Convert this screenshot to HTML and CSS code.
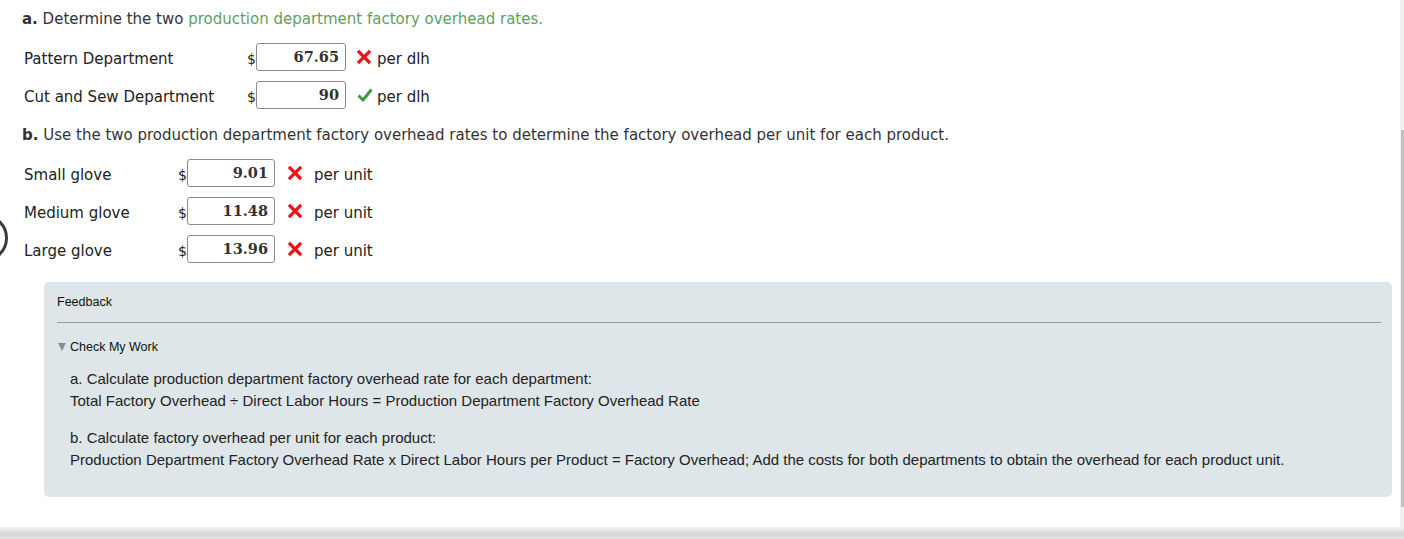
FILE: index.html
```html
<!DOCTYPE html>
<html>
<head>
<meta charset="utf-8">
<link rel="stylesheet" href="styles.css">
</head>
<body>
<div class="page">
  <div class="circle-edge"></div>
  <main class="content">
    <p class="prompt"><b>a.</b> Determine the two <span class="green">production department factory overhead rates.</span></p>
    <div class="rows rows-a">
      <div class="row">
        <span class="label">Pattern Department</span>
        <span class="dollar">$</span>
        <span class="box">67.65</span>
        <span class="mark"><svg width="14" height="14" viewBox="0 0 14 14"><path d="M2 2 L12 12 M12 2 L2 12" stroke="#e8161b" stroke-width="3.2" stroke-linecap="square"/></svg></span>
        <span class="unit">per dlh</span>
      </div>
      <div class="row">
        <span class="label">Cut and Sew Department</span>
        <span class="dollar">$</span>
        <span class="box">90</span>
        <span class="mark"><svg width="16" height="16" viewBox="0 0 16 16"><path d="M1.5 8.5 L6 13 L14.5 2.5" fill="none" stroke="#3d9b3d" stroke-width="3" stroke-linejoin="round"/></svg></span>
        <span class="unit">per dlh</span>
      </div>
    </div>
    <p class="prompt"><b>b.</b> Use the two production department factory overhead rates to determine the factory overhead per unit for each product.</p>
    <div class="rows rows-b">
      <div class="row">
        <span class="label">Small glove</span>
        <span class="dollar">$</span>
        <span class="box">9.01</span>
        <span class="mark"><svg width="14" height="14" viewBox="0 0 14 14"><path d="M2 2 L12 12 M12 2 L2 12" stroke="#e8161b" stroke-width="3.2" stroke-linecap="square"/></svg></span>
        <span class="unit">per unit</span>
      </div>
      <div class="row">
        <span class="label">Medium glove</span>
        <span class="dollar">$</span>
        <span class="box">11.48</span>
        <span class="mark"><svg width="14" height="14" viewBox="0 0 14 14"><path d="M2 2 L12 12 M12 2 L2 12" stroke="#e8161b" stroke-width="3.2" stroke-linecap="square"/></svg></span>
        <span class="unit">per unit</span>
      </div>
      <div class="row">
        <span class="label">Large glove</span>
        <span class="dollar">$</span>
        <span class="box">13.96</span>
        <span class="mark"><svg width="14" height="14" viewBox="0 0 14 14"><path d="M2 2 L12 12 M12 2 L2 12" stroke="#e8161b" stroke-width="3.2" stroke-linecap="square"/></svg></span>
        <span class="unit">per unit</span>
      </div>
    </div>
    <section class="feedback">
      <div class="fb-title">Feedback</div>
      <div class="fb-rule"></div>
      <div class="fb-toggle"><span class="tri"></span>Check My Work</div>
      <div class="fb-body">
        <p>a. Calculate production department factory overhead rate for each department:<br>Total Factory Overhead ÷ Direct Labor Hours = Production Department Factory Overhead Rate</p>
        <p>b. Calculate factory overhead per unit for each product:<br>Production Department Factory Overhead Rate x Direct Labor Hours per Product = Factory Overhead; Add the costs for both departments to obtain the overhead for each product unit.</p>
      </div>
    </section>
  </main>
  <div class="scrollbar"><div class="thumb"></div></div>
</div>
<div class="bottom-shade"></div>
</body>
</html>
```
FILE: styles.css
```css
html, body {
  margin: 0;
  padding: 0;
  background: #fff;
}
body {
  width: 1404px;
  height: 539px;
  overflow: hidden;
  font-family: "DejaVu Sans", Verdana, sans-serif;
  color: #222;
}
.page {
  position: relative;
  display: flex;
  height: 527px;
}
.content {
  flex: 1;
  padding: 9px 0 0 22px;
}
.prompt {
  margin: 0;
  font-size: 15px;
  line-height: 20px;
  color: #333;
}
.prompt b {
  font-weight: bold;
  color: #333;
}
.green {
  color: #5f9f5f;
}
.rows {
  display: flex;
  flex-direction: column;
  gap: 10px;
  padding: 14px 0 16px 2px;
}
.rows-b {
  padding-bottom: 14px;
}
.row {
  display: flex;
  align-items: center;
  height: 28px;
  font-size: 15px;
  color: #222;
}
.label, .dollar, .unit {
  padding-top: 4px;
}
.rows-a .label { width: 223px; }
.rows-b .label { width: 154px; }
.dollar {
  width: 9px;
  font-size: 14px;
}
.box {
  box-sizing: border-box;
  width: 90px;
  height: 28px;
  border: 1px solid #8a8a8a;
  border-radius: 3px;
  text-align: right;
  padding-right: 6px;
  font-family: "DejaVu Serif", Georgia, serif;
  font-weight: bold;
  font-size: 14.5px;
  line-height: 26px;
  color: #333;
}
.rows-b .box { width: 88px; }
.mark {
  display: flex;
  align-items: center;
  width: 20px;
  padding-left: 11px;
}
.rows-b .mark { width: 26px; padding-left: 13px; }
.circle-edge {
  position: absolute;
  left: -40px;
  top: 214px;
  width: 42px;
  height: 42px;
  border: 3px solid #3a3a3a;
  border-radius: 50%;
}
.feedback {
  margin: 5px 8px 0 22px;
  background: #dfe6e9;
  border-radius: 5px;
  padding: 12px 11px 26px 13px;
  font-family: "Liberation Sans", Arial, sans-serif;
  color: #111;
}
.fb-title {
  font-size: 12.5px;
  line-height: 16px;
}
.fb-rule {
  height: 1px;
  background: #959b9e;
  margin: 12px 0 0 0;
}
.fb-toggle {
  margin-top: 16px;
  font-size: 12.5px;
  line-height: 16px;
  display: flex;
  align-items: center;
}
.tri {
  width: 0;
  height: 0;
  border-left: 4px solid transparent;
  border-right: 4px solid transparent;
  border-top: 8px solid #8c8c8c;
  margin: 0 4px 0 1px;
}
.fb-body {
  padding-left: 13px;
  font-size: 15px;
  line-height: 22px;
  color: #222;
}
.fb-body p {
  margin: 13px 0 0 0;
}
.fb-body p + p {
  margin-top: 15px;
}
.scrollbar {
  width: 4px;
  background: #f1f1f1;
  position: relative;
}
.thumb {
  position: absolute;
  left: 1px;
  top: 130px;
  width: 3px;
  height: 377px;
  background: #c1c1c1;
}
.bottom-shade {
  height: 12px;
  background: linear-gradient(#f4f4f4, #d6d6d6 60%, #e6e6e6);
}
```
